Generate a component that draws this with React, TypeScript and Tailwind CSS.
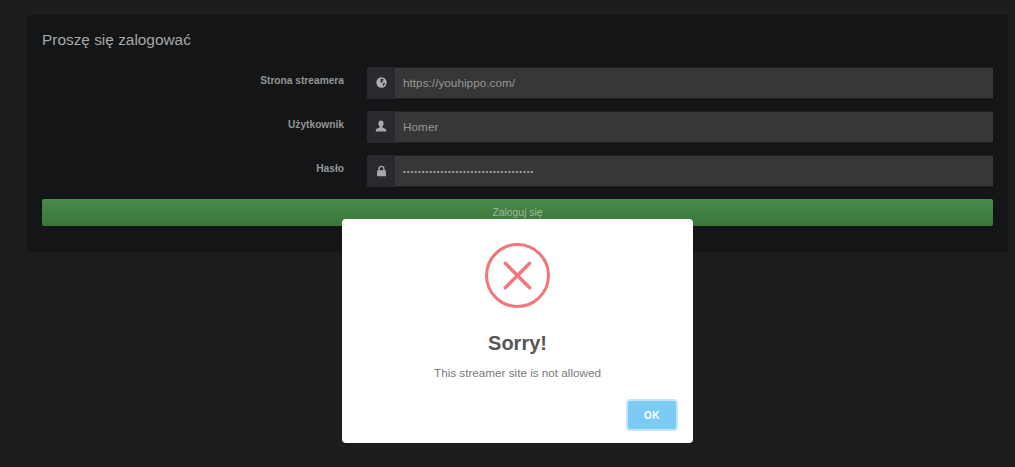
import { ReactNode } from 'react';

function GlobeIcon() {
  return (
    <svg viewBox="0 0 12 12" className="w-[11px] h-[11px] -mt-[2px]">
      <circle cx="6" cy="6" r="5.6" fill="#b0b0b0" />
      <path d="M4.6 2.2 L7.6 1.8 L8.4 3.4 L6.8 4.6 L7.4 5.8 L5.8 6.4 L4.6 5 L5.4 3.6 Z M8.4 6.4 L10 6.6 L8.8 9.2 L7.6 9.8 L7.4 7.8 Z" fill="#2a2c2f" />
    </svg>
  );
}

function UserIcon() {
  return (
    <svg viewBox="0 0 12 12" className="w-[12px] h-[12px] -mt-[2px]">
      <path d="M6 0.6 C7.7 0.6 8.6 1.9 8.6 3.6 C8.6 5 8 6 7.4 6.6 L7.4 7.4 C9 8 11.2 8.6 11.2 10 L11.2 11.4 L0.8 11.4 L0.8 10 C0.8 8.6 3 8 4.6 7.4 L4.6 6.6 C4 6 3.4 5 3.4 3.6 C3.4 1.9 4.3 0.6 6 0.6 Z" fill="#a9a9a9" />
    </svg>
  );
}

function LockIcon() {
  return (
    <svg viewBox="0 0 12 12" className="w-[11px] h-[12px] -mt-[1px]">
      <path d="M3.4 5.4 V3.6 C3.4 2 4.5 1 6 1 C7.5 1 8.6 2 8.6 3.6 V5.4" fill="none" stroke="#a9a9a9" strokeWidth="1.5" />
      <rect x="1.2" y="5.2" width="9.6" height="6.4" rx="0.6" fill="#a9a9a9" />
    </svg>
  );
}

function FormRow({ label, icon, children }: { label: string; icon: ReactNode; children: ReactNode }) {
  return (
    <div className="flex h-[32px]">
      <label className="w-[302px] pt-[7px] text-right text-[10.2px] leading-[14px] font-bold text-[#969696]">
        {label}
      </label>
      <div className="ml-[23px] w-[28px] flex items-center justify-center bg-[#282a2d] rounded-l-[2px]">{icon}</div>
      <div className="flex-1 flex items-center px-[8px] pt-[1px] bg-[#373737] border-y border-[#222222] text-[11.8px] text-[#969696]">
        {children}
      </div>
    </div>
  );
}

export default function App() {
  return (
    <div className="relative h-[467px] overflow-hidden bg-[#1a1c1e] font-['Liberation_Sans',Arial,sans-serif]">
      <div className="pt-[15px] pl-[27px] pr-[7px]">
        <div className="h-[237px] bg-[#131517] rounded-[2px] px-[15px] pt-[15px]">
          <h1 className="text-[15.4px] leading-[20px] text-[#a8a8a8]">Proszę się zalogować</h1>
          <div className="mt-[17px] flex flex-col gap-[12px]">
            <FormRow label="Strona streamera" icon={<GlobeIcon />}>
              https://youhippo.com/
            </FormRow>
            <FormRow label="Użytkownik" icon={<UserIcon />}>
              Homer
            </FormRow>
            <FormRow label="Hasło" icon={<LockIcon />}>
              <span className="text-[8px] tracking-[0.95px] text-[#a8a8a8]">•••••••••••••••••••••••••••••••••••</span>
            </FormRow>
          </div>
          <button className="mt-[12px] w-full h-[27px] rounded-[2px] bg-gradient-to-b from-[#4a8a4a] to-[#3a763a] text-[10.4px] text-[#a0b8a0] leading-[27px]">
            Zaloguj się
          </button>
        </div>
      </div>

      {/* alert on top of the page */}
      <div className="absolute left-[342px] top-[219px] w-[351px] h-[224px] bg-white rounded-[4px] flex flex-col items-center">
        <svg viewBox="0 0 64 64" className="mt-[24px] w-[65px] h-[65px]">
          <circle cx="32" cy="32" r="30.5" fill="none" stroke="#f0787c" strokeWidth="3" />
          <path d="M20 20 L44 44 M44 20 L20 44" stroke="#f4777b" strokeWidth="3.4" strokeLinecap="round" />
        </svg>
        <h2 className="mt-[23px] text-[20px] leading-[24px] font-bold text-[#575757]">Sorry!</h2>
        <p className="mt-[10px] text-[11.7px] leading-[16px] text-[#797979]">This streamer site is not allowed</p>
        <div className="mt-[18px] w-full flex justify-end pr-[15px]">
          <button className="w-[52px] h-[32px] rounded-[4px] bg-[#7ccbf4] border-2 border-[#c4e6f8] text-[10px] font-bold tracking-[0.4px] text-white">
            OK
          </button>
        </div>
      </div>
    </div>
  );
}
